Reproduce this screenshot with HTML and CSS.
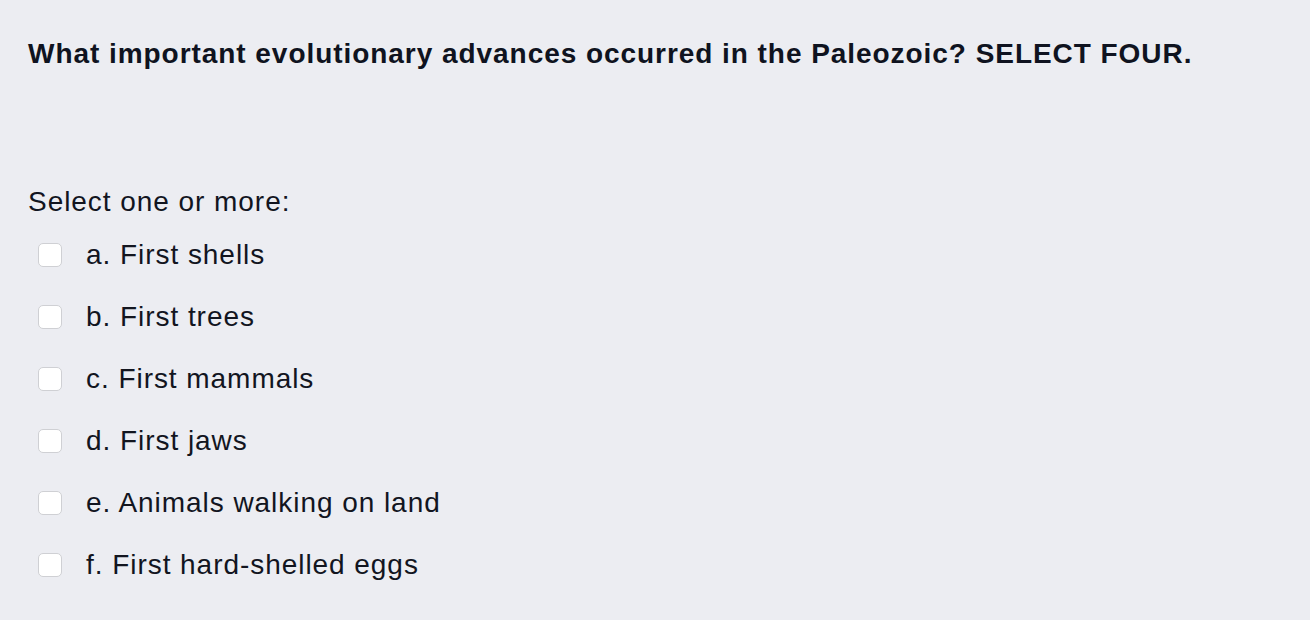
FILE: index.html
```html
<!DOCTYPE html>
<html>
<head>
<meta charset="utf-8">
<link rel="stylesheet" href="styles.css">
</head>
<body>
<div class="page">
  <h1 class="question">What important evolutionary advances occurred in the Paleozoic? SELECT FOUR.</h1>
  <p class="prompt">Select one or more:</p>
  <div class="options">
    <label class="option"><span class="box"></span><span class="label">a. First shells</span></label>
    <label class="option"><span class="box"></span><span class="label">b. First trees</span></label>
    <label class="option"><span class="box"></span><span class="label">c. First mammals</span></label>
    <label class="option"><span class="box"></span><span class="label">d. First jaws</span></label>
    <label class="option"><span class="box"></span><span class="label">e. Animals walking on land</span></label>
    <label class="option"><span class="box"></span><span class="label">f. First hard-shelled eggs</span></label>
  </div>
</div>
</body>
</html>
```
FILE: styles.css
```css
html, body {
  margin: 0;
  padding: 0;
  background: #ecedf2;
}
body {
  font-family: "Liberation Sans", Arial, sans-serif;
  color: #12151f;
  letter-spacing: 0.95px;
}
.page {
  padding: 36px 28px 0 28px;
}
.question {
  margin: 0;
  font-size: 28px;
  font-weight: bold;
  line-height: 36px;
  color: #0f1320;
}
.prompt {
  margin: 112px 0 0 0;
  font-size: 28px;
  line-height: 36px;
}
.options {
  display: flex;
  flex-direction: column;
  gap: 26px;
  margin-top: 17px;
  padding-left: 10px;
}
.option {
  display: flex;
  align-items: center;
  height: 36px;
  font-size: 28px;
}
.box {
  width: 22px;
  height: 22px;
  background: #ffffff;
  border: 1px solid #cfd0d4;
  border-radius: 5px;
  margin-right: 24px;
}
```
